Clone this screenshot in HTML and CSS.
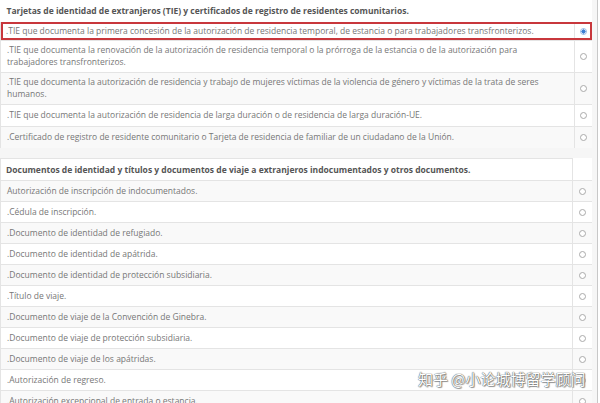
FILE: index.html
```html
<!DOCTYPE html>
<html>
	<head>
		<meta charset="utf-8">
		<title>Documentos</title>
		<link rel="stylesheet" href="styles.css">
	</head>
	<body>
		<div class="page">
			<table class="docs">
				<tr class="head"><th colspan="2">Tarjetas de identidad de extranjeros (TIE) y certificados de registro de residentes comunitarios.</th></tr>
				<tr class="selected"><td>.TIE que documenta la primera concesión de la autorización de residencia temporal, de estancia o para trabajadores transfronterizos.</td><td class="opt"><span class="radio checked"></span></td></tr>
				<tr class="tall"><td>.TIE que documenta la renovación de la autorización de residencia temporal o la prórroga de la estancia o de la autorización para trabajadores transfronterizos.</td><td class="opt"><span class="radio"></span></td></tr>
				<tr class="tall odd"><td>.TIE que documenta la autorización de residencia y trabajo de mujeres víctimas de la violencia de género y víctimas de la trata de seres humanos.</td><td class="opt"><span class="radio"></span></td></tr>
				<tr class="mid"><td>.TIE que documenta la autorización de residencia de larga duración o de residencia de larga duración-UE.</td><td class="opt"><span class="radio"></span></td></tr>
				<tr class="mid odd"><td>.Certificado de registro de residente comunitario o Tarjeta de residencia de familiar de un ciudadano de la Unión.</td><td class="opt"><span class="radio"></span></td></tr>
			</table>

			<table class="docs second">
				<tr class="head boxed"><th>Documentos de identidad y títulos y documentos de viaje a extranjeros indocumentados y otros documentos.</th><th class="blank"></th></tr>
				<tr class="odd"><td>Autorización de inscripción de indocumentados.</td><td class="opt"><span class="radio"></span></td></tr>
				<tr><td>.Cédula de inscripción.</td><td class="opt"><span class="radio"></span></td></tr>
				<tr class="odd"><td>.Documento de identidad de refugiado.</td><td class="opt"><span class="radio"></span></td></tr>
				<tr><td>.Documento de identidad de apátrida.</td><td class="opt"><span class="radio"></span></td></tr>
				<tr class="odd"><td>.Documento de identidad de protección subsidiaria.</td><td class="opt"><span class="radio"></span></td></tr>
				<tr><td>.Título de viaje.</td><td class="opt"><span class="radio"></span></td></tr>
				<tr class="odd"><td>.Documento de viaje de la Convención de Ginebra.</td><td class="opt"><span class="radio"></span></td></tr>
				<tr><td>.Documento de viaje de protección subsidiaria.</td><td class="opt"><span class="radio"></span></td></tr>
				<tr class="odd"><td>.Documento de viaje de los apátridas.</td><td class="opt"><span class="radio"></span></td></tr>
				<tr><td>.Autorización de regreso.</td><td class="opt"><span class="radio"></span></td></tr>
				<tr class="odd"><td>.Autorización excepcional de entrada o estancia.</td><td class="opt"><span class="radio"></span></td></tr>
			</table>

			<div class="watermark">知乎 @小论城博留学顾问</div>
		</div>
	</body>
</html>
```

FILE: styles.css
```css
* {
	margin: 0;
	padding: 0;
	box-sizing: border-box;
}

body {
	font-family: "Open Sans", "Noto Sans CJK SC", sans-serif;
	font-size: 8.5px;
	color: #777;
	background: #fff;
	overflow: hidden;
}

.page {
	position: relative;
	width: 598px;
	height: 403px;
	overflow: hidden;
	border-right: 1px solid #c8c8c8;
	background: #f6f6f6;
}

.docs {
	width: 592px;
	border-collapse: collapse;
	background: #fff;
}

.docs th {
	height: 22px;
	text-align: left;
	font-weight: 700;
	color: #555;
	padding: 0 6px 1px;
	line-height: 11px;
	vertical-align: middle;
}

.docs td {
	height: 21px;
	padding: 0 6px;
	line-height: 12px;
	vertical-align: middle;
	border-top: 1px solid #e4e4e4;
	border-left: 1px solid #e4e4e4;
}

.docs tr.selected td {
	height: 18px;
	padding: 0 5px 1px;
}

.docs tr.tall td {
	height: 32px;
}

.docs tr.mid td {
	height: 22px;
}

.docs td.opt {
	width: 17px;
	padding: 0;
	text-align: center;
}

.docs tr.odd td {
	background: #f9f9f9;
}

.docs tr.selected {
	outline: 2px solid #c8373c;
	outline-offset: -2px;
}

.second {
	margin-top: 10px;
}

.second tr.boxed th {
	border: 1px solid #e4e4e4;
	padding: 0 5px 1px;
	background: #fff;
}

.second tr.boxed th.blank {
	border: none;
	background: #fff;
	width: 20px;
}

.radio {
	display: inline-block;
	width: 7px;
	height: 7px;
	border: 1px solid #aaa;
	border-radius: 50%;
	background: #fff;
	vertical-align: middle;
}

.radio.checked {
	border-color: #9fc0e8;
	background: radial-gradient(circle, #3d7fd3 0, #3d7fd3 55%, #dbe8f8 60%);
}

.watermark {
	position: absolute;
	left: 418px;
	top: 368px;
	white-space: nowrap;
	font-family: "Noto Sans CJK SC", sans-serif;
	font-size: 15px;
	color: #fff;
	letter-spacing: 0;
	text-shadow: 0 0 1px #555, 0 0 1px #555, 1px 1px 1px #999;
}
```
